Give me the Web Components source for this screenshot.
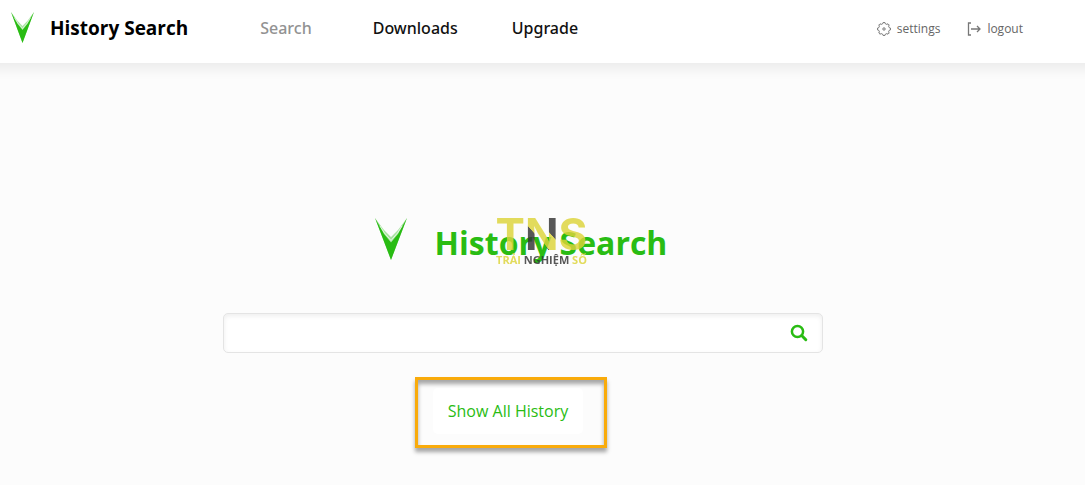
<!DOCTYPE html>
<html lang="en">
<head>
<meta charset="utf-8">
<meta name="viewport" content="width=device-width, initial-scale=1">
<title>History Search</title>
<style>
  html, body { height: 100%; }
  body { margin: 0; background: #fcfcfc; font-family: "Open Sans", "Noto Sans", sans-serif; --green: #29bc13; }
</style>
</head>
<body>
<history-page></history-page>

<script>
class BaseElement extends HTMLElement {
  constructor() {
    super();
    const t = document.createElement('template');
    t.innerHTML = this.constructor.markup;
    this.attachShadow({ mode: 'open' }).append(t.content.cloneNode(true));
  }
}

class BrandMark extends BaseElement {
  static markup = `
    <style>
      :host { display: block; flex: none; width: 23px; height: 31px; }
      svg { display: block; width: 100%; height: 100%; }
    </style>
    <svg viewBox="0 0 32 42" preserveAspectRatio="none" aria-hidden="true">
      <path d="M0 0 L9 12 L16 19 L23 12 L32 0 L16 42 Z" fill="var(--green)" opacity=".4"/>
      <path d="M0 0 L9 16 L16 24.500 L23 16 L32 0 L16 42 Z" fill="var(--green)"/>
      <path d="M5 8 L9.500 15 L16 22.500 L22.500 15 L27 8" fill="none" stroke="#fff" stroke-width="1" opacity=".7"/>
    </svg>`;
}
customElements.define('brand-mark', BrandMark);

class NavLink extends BaseElement {
  static observedAttributes = ['href'];
  static markup = `
    <style>
      :host { display: block; color: #111; font-family: "Noto Sans", sans-serif; font-size: 16px; line-height: 24px; font-weight: 500; }
      :host([current]) { color: #929292; }
      a { color: inherit; text-decoration: none; }
    </style>
    <a href="#"><slot></slot></a>`;
  attributeChangedCallback(n, o, v) { this.shadowRoot.querySelector('a').href = v; }
}
customElements.define('nav-link', NavLink);

class ToolLink extends BaseElement {
  static markup = `
    <style>
      :host { display: block; color: #666; font-size: 12px; line-height: 16px; }
      a { display: flex; align-items: center; gap: 6px; color: inherit; text-decoration: none; }
      ::slotted(svg) { display: block; width: 14px; height: 14px; }
    </style>
    <a href="#"><slot name="icon"></slot><slot></slot></a>`;
}
customElements.define('tool-link', ToolLink);

class SiteHeader extends BaseElement {
  static markup = `
    <style>
      :host { display: flex; align-items: flex-start; box-sizing: border-box; min-height: 63px;
        padding: 12px 62px 8px 11px; background: #fff; box-shadow: 0 -6px 12px 12px rgba(0,0,0,.07); }
      .brand { display: flex; gap: 16px; color: #000; text-decoration: none; font-size: 19px; line-height: 32px; font-weight: 700; }
      nav { display: flex; gap: 54px; margin-left: 72px; padding-top: 4px; }
      nav-link[current] { margin-right: 7px; }
      .tools { display: flex; gap: 27px; margin-left: auto; padding-top: 9px; }
    </style>
    <a class="brand" href="#"><brand-mark></brand-mark><span>History Search</span></a>
    <nav aria-label="Main">
      <nav-link current href="#search">Search</nav-link>
      <nav-link href="#downloads">Downloads</nav-link>
      <nav-link href="#upgrade">Upgrade</nav-link>
    </nav>
    <div class="tools">
      <tool-link>
        <svg slot="icon" viewBox="0 0 14 14" fill="none" stroke="#777" aria-hidden="true">
          <path stroke-linejoin="round" d="M5.600 1.800 L6 .6 H8 L8.400 1.800 L9.800 2.400 L11 1.800 L12.200 3 L11.600 4.200 L12.200 5.600 L13.400 6 V8 L12.200 8.400 L11.600 9.800 L12.200 11 L11 12.200 L9.800 11.600 L8.400 12.200 L8 13.400 H6 L5.600 12.200 L4.200 11.600 L3 12.200 L1.800 11 L2.400 9.800 L1.800 8.400 L.6 8 V6 L1.800 5.600 L2.400 4.200 L1.800 3 L3 1.800 L4.200 2.400 Z"/>
          <circle cx="7" cy="7" r="1.200"/>
        </svg>settings</tool-link>
      <tool-link>
        <svg slot="icon" viewBox="0 0 14 14" fill="none" stroke="#777" stroke-width="1.300" aria-hidden="true">
          <path d="M4 1H1.500v12H4M4 7h9M10 4l3 3-3 3"/>
        </svg>logout</tool-link>
    </div>`;
}
customElements.define('site-header', SiteHeader);

class TnsWatermark extends BaseElement {
  static markup = `
    <style>
      :host { display: block; width: max-content; text-align: center; color: #ddd439; opacity: .82; pointer-events: none; }
      .mark { font: 700 44px/32px Inter, sans-serif; }
      .n { color: transparent; background: linear-gradient(48deg, #333 41%, #ddd439 42%, #ddd439 60%, #333 61%);
        -webkit-background-clip: text; background-clip: text; }
      .name { font-size: 11px; line-height: 20px; font-weight: 700; }
      .name span { color: #333; }
    </style>
    <div class="mark">T<span class="n">N</span>S</div>
    <div class="name">TRẢI <span>NGHIỆM</span> SỐ</div>`;
}
customElements.define('tns-watermark', TnsWatermark);

class SearchBox extends BaseElement {
  static markup = `
    <style>
      :host { display: block; width: 100%; max-width: 600px; }
      form { display: flex; box-sizing: border-box; height: 40px; border: 1px solid #e4e4e4; border-radius: 5px;
        background: #fff; box-shadow: inset 0 2px 5px rgba(0,0,0,.07); }
      input { flex: 1; min-width: 0; border: 0; padding: 0 12px; background: none; outline: 0; font: 16px "Open Sans", sans-serif; }
      button { display: grid; place-items: center; width: 46px; border: 0; padding: 0; background: none; cursor: pointer; }
      svg { width: 18px; height: 18px; }
    </style>
    <form role="search">
      <input type="text" aria-label="Search history">
      <button type="button" aria-label="Search">
        <svg viewBox="0 0 18 18" fill="none" stroke="var(--green)" aria-hidden="true">
          <circle cx="7.500" cy="7.500" r="5.600" stroke-width="2.500"/>
          <path d="M11.900 11.700l3.900 4" stroke-width="3" stroke-linecap="round"/>
        </svg>
      </button>
    </form>`;
}
customElements.define('search-box', SearchBox);

class HistoryButton extends BaseElement {
  static markup = `
    <style>
      :host { display: block; position: relative; }
      a { display: block; padding: 11px 15px; border-radius: 5px; background: #fff; color: var(--green);
        font-size: 16px; line-height: 24px; text-decoration: none; }
      .frame { position: absolute; inset: -11px -24px -14px -18px; border: 3px solid #f9ab0b; pointer-events: none;
        box-shadow: 0 4px 4px rgba(0,0,0,.35), inset 0 4px 4px rgba(0,0,0,.35); }
    </style>
    <a href="#"><slot></slot></a>
    <div class="frame"></div>`;
}
customElements.define('history-button', HistoryButton);

class HistoryPage extends BaseElement {
  static markup = `
    <style>
      :host { display: block; }
      main { display: flex; flex-direction: column; align-items: center; padding: 155px 51px 37px 12px; }
      .title { position: relative; display: flex; align-items: flex-start; gap: 28px; padding-right: 4px; }
      .title brand-mark { width: 32px; height: 42px; }
      h1 { margin: 0; padding: 3px 0 1px; color: var(--green); font-size: 32px; line-height: 44px; font-weight: 700; }
      tns-watermark { position: absolute; top: 0; left: 121px; }
      search-box { margin-top: 47px; }
      history-button { margin: 35px 30px 0 0; }
    </style>
    <site-header></site-header>
    <main>
      <div class="title">
        <brand-mark></brand-mark>
        <h1>History Search</h1>
        <tns-watermark></tns-watermark>
      </div>
      <search-box></search-box>
      <history-button>Show All History</history-button>
    </main>`;
}
customElements.define('history-page', HistoryPage);
</script>
</body>
</html>
